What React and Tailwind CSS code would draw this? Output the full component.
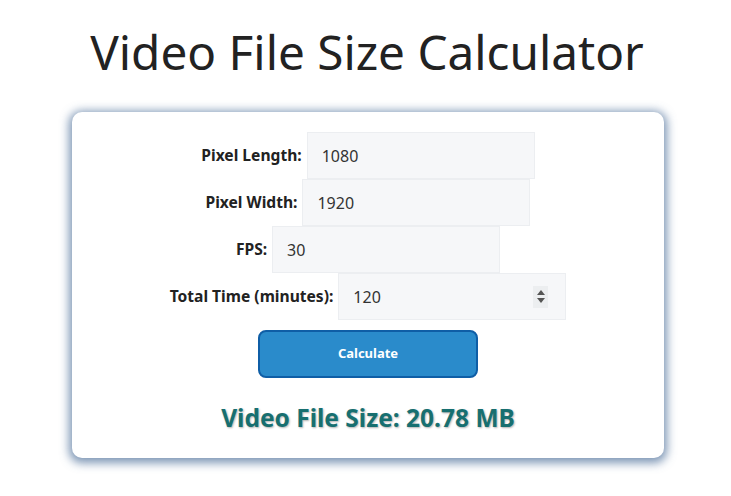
export default function App() {
  const rows = [
    { label: "Pixel Length:", value: "1080" },
    { label: "Pixel Width:", value: "1920" },
    { label: "FPS:", value: "30" },
    { label: "Total Time (minutes):", value: "120", spin: true },
  ];
  return (
    <div className="min-h-[496px] bg-white pt-[22px]" style={{ fontFamily: '"Noto Sans", "Open Sans", sans-serif' }}>
      <h1 className="ml-[3px] text-center text-[47.7px] leading-[60px] font-normal text-[#222]">Video File Size Calculator</h1>
      <div className="ml-[72px] mt-[30px] w-[592px] rounded-[10px] bg-white pt-[20px] pb-[21px] shadow-[0_2px_10px_3px_rgba(70,105,150,0.7)]">
        <div className="flex flex-col items-center">
          {rows.map((r) => (
            <div key={r.label} className="flex items-center gap-[5px]">
              <span className="text-[15.6px] font-bold text-[#222]">{r.label}</span>
              <div className="flex h-[47px] w-[228px] items-center border border-[#eceef1] bg-[#f6f7f9] pl-[14px] pr-[17px] text-[16px] text-[#333]">
                <span className="flex-1">{r.value}</span>
                {r.spin && (
                  <span className="flex h-[22px] w-[15px] flex-col items-center justify-center gap-[3px] bg-[#eceef0]">
                    <svg width="8" height="5" viewBox="0 0 8 5"><path d="M0 5 L4 0 L8 5 Z" fill="#555" /></svg>
                    <svg width="8" height="5" viewBox="0 0 8 5"><path d="M0 0 L4 5 L8 0 Z" fill="#555" /></svg>
                  </span>
                )}
              </div>
            </div>
          ))}
          <button className="mt-[10px] h-[48px] w-[220px] rounded-[8px] border-2 border-[#0f5ea6] bg-[#2a8bcb] text-[13px] font-bold text-white">
            Calculate
          </button>
          <div className="mt-[22px] text-[24.5px] font-bold text-[#176f70] [text-shadow:1px_1px_2px_rgba(0,0,0,0.3)]">
            Video File Size: 20.78 MB
          </div>
        </div>
      </div>
    </div>
  );
}
